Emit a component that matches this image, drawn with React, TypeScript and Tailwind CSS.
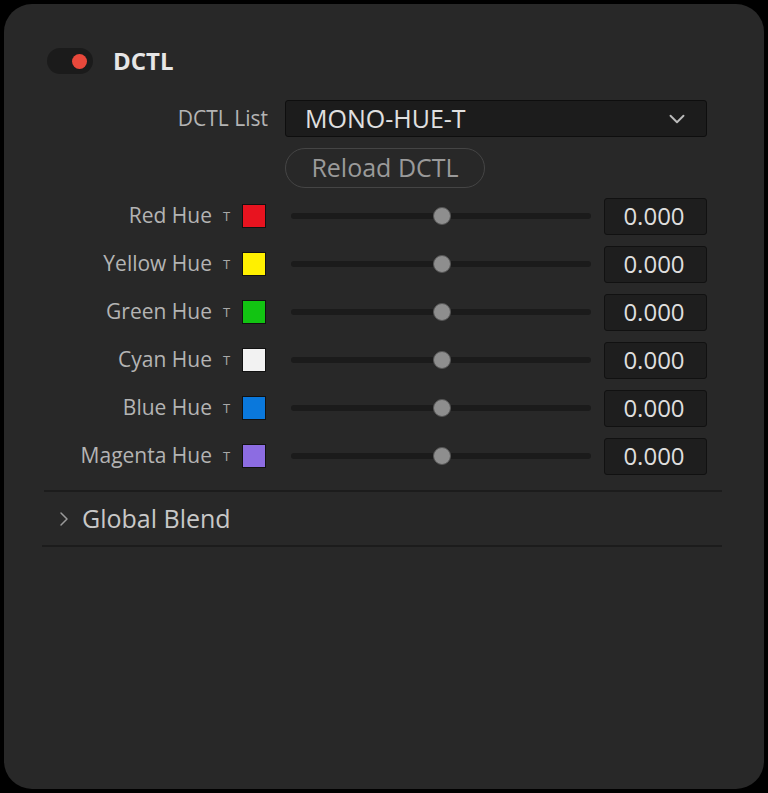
import React from 'react';
import { ChevronDown, ChevronRight } from 'lucide-react';

const hues = [
  { name: 'Red Hue', color: 'bg-[#e8131f]' },
  { name: 'Yellow Hue', color: 'bg-[#fff000]' },
  { name: 'Green Hue', color: 'bg-[#12c412]' },
  { name: 'Cyan Hue', color: 'bg-[#f2f2f2]' },
  { name: 'Blue Hue', color: 'bg-[#0a78dc]' },
  { name: 'Magenta Hue', color: 'bg-[#8c6ce2]' },
];

function HueRow({ name, color }: { name: string; color: string }) {
  return (
    <div className="flex items-center h-[48px]">
      <div className="w-[208px] text-right text-[21px] text-[#b4b4b4]">{name}</div>
      <div className="ml-[11px] w-[9px] text-[13px] text-[#a8a8a8] leading-none">T</div>
      <div className={`ml-[10px] w-[24px] h-[24px] border border-[#111] ${color}`}></div>
      <div className="ml-[25px] w-[300px] h-[6px] rounded-full bg-[#1b1b1b] relative">
        <div className="absolute left-[142px] top-[-6px] w-[18px] h-[18px] rounded-full bg-[#8e8e8e] border border-[#555]"></div>
      </div>
      <div className="ml-[13px] w-[103px] h-[37px] rounded-[3px] bg-[#1e1e1e] border border-[#111] flex items-center justify-center pr-[3px] text-[24px] text-[#dedede]">
        0.000
      </div>
    </div>
  );
}

export default function App() {
  return (
    <div className="w-[768px] h-[793px] bg-black p-[4px] font-['Open_Sans',sans-serif]">
      <div className="w-[760px] h-[785px] bg-[#282828] rounded-[28px] pt-[44px]">
        <div className="flex items-center h-[26px]">
          <div className="ml-[43px] w-[46px] h-[26px] rounded-full bg-[#1b1b1b] flex items-center justify-end pr-[6px]">
            <div className="w-[15px] h-[15px] rounded-full bg-[#e8483b]"></div>
          </div>
          <div className="ml-[20px] text-[24px] font-bold text-[#e6e6e6]">DCTL</div>
        </div>

        <div className="flex items-center mt-[26px]">
          <div className="w-[264px] text-right text-[21px] text-[#b4b4b4]">DCTL List</div>
          <div className="ml-[17px] w-[422px] h-[37px] rounded-[3px] bg-[#1c1c1c] border border-[#0e0e0e] flex items-center pl-[19px] pr-[16px]">
            <span className="text-[25px] text-[#e0e0e0] flex-1">MONO-HUE-T</span>
            <ChevronDown size={26} strokeWidth={1.75} className="text-[#bbbbbb]" />
          </div>
        </div>

        <div className="ml-[281px] mt-[11px] w-[200px] h-[40px] rounded-full border border-[#454545] flex items-center justify-center text-[25px] text-[#9a9a9a]">
          Reload DCTL
        </div>

        <div className="mt-[4px]">
          {hues.map((h) => (
            <HueRow key={h.name} name={h.name} color={h.color} />
          ))}
        </div>

        <div className="ml-[40px] mt-[10px] w-[678px] h-[2px] bg-[#1c1c1c]"></div>
        <div className="flex items-center h-[53px] ml-[48px]">
          <ChevronRight size={24} strokeWidth={1.5} className="text-[#9a9a9a]" />
          <span className="ml-[6px] text-[25px] text-[#c8c8c8]">Global Blend</span>
        </div>
        <div className="ml-[38px] w-[680px] h-[2px] bg-[#1c1c1c]"></div>
      </div>
    </div>
  );
}
